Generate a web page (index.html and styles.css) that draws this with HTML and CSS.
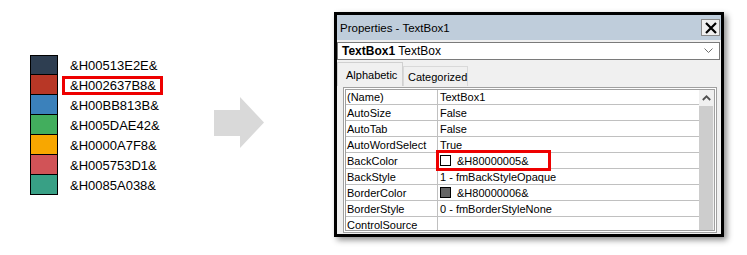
FILE: index.html
```html
<!DOCTYPE html>
<html>
<head>
<meta charset="utf-8">
<link rel="stylesheet" href="styles.css">
</head>
<body>
<div class="page">
  <div class="palette">
    <div class="row"><span class="chip c1"></span><span class="code">&amp;H00513E2E&amp;</span></div>
    <div class="row"><span class="chip c2"></span><span class="code hl">&amp;H002637B8&amp;</span></div>
    <div class="row"><span class="chip c3"></span><span class="code">&amp;H00BB813B&amp;</span></div>
    <div class="row"><span class="chip c4"></span><span class="code">&amp;H005DAE42&amp;</span></div>
    <div class="row"><span class="chip c5"></span><span class="code">&amp;H0000A7F8&amp;</span></div>
    <div class="row"><span class="chip c6"></span><span class="code">&amp;H005753D1&amp;</span></div>
    <div class="row"><span class="chip c7"></span><span class="code">&amp;H0085A038&amp;</span></div>
  </div>
  <svg class="arrow" width="50" height="51" viewBox="0 0 50 51"><polygon points="0,13 26,13 26,0 50,25.5 26,51 26,39 0,39" fill="#d9d9d9"/></svg>
  <div class="window">
    <div class="titlebar">
      <span class="title">Properties - TextBox1</span>
      <span class="close"><svg width="12" height="12" viewBox="0 0 12 12"><path d="M1 1L11 11M11 1L1 11" stroke="#000" stroke-width="2.2"/></svg></span>
    </div>
    <div class="combo">
      <span class="combo-text"><b>TextBox1</b> TextBox</span>
      <svg class="chev" width="9" height="6" viewBox="0 0 9 6"><path d="M0.5 0.5L4.5 4.5L8.5 0.5" stroke="#707070" stroke-width="1" fill="none"/></svg>
    </div>
    <div class="tabs">
      <span class="tab active">Alphabetic</span>
      <span class="tab">Categorized</span>
    </div>
    <div class="grid">
      <div class="rows">
        <div class="prow"><span class="pname">(Name)</span><span class="pval">TextBox1</span></div>
        <div class="prow"><span class="pname">AutoSize</span><span class="pval">False</span></div>
        <div class="prow"><span class="pname">AutoTab</span><span class="pval">False</span></div>
        <div class="prow"><span class="pname">AutoWordSelect</span><span class="pval">True</span></div>
        <div class="prow"><span class="pname">BackColor</span><span class="pval boxed"><span class="sw sw-white"></span>&amp;H80000005&amp;</span></div>
        <div class="prow"><span class="pname">BackStyle</span><span class="pval">1 - fmBackStyleOpaque</span></div>
        <div class="prow"><span class="pname">BorderColor</span><span class="pval"><span class="sw sw-gray"></span>&amp;H80000006&amp;</span></div>
        <div class="prow"><span class="pname">BorderStyle</span><span class="pval">0 - fmBorderStyleNone</span></div>
        <div class="prow last"><span class="pname">ControlSource</span><span class="pval"></span></div>
      </div>
      <div class="scroll">
        <div class="sbtn"><svg width="9" height="6" viewBox="0 0 9 6"><path d="M0.8 5L4.5 1.3L8.2 5" stroke="#505050" stroke-width="1.8" fill="none"/></svg></div>
        <div class="thumb"></div>
      </div>
    </div>
  </div>
</div>
</body>
</html>
```
FILE: styles.css
```css
html, body {
  margin: 0;
  padding: 0;
  background: #fff;
}
.page {
  display: flex;
  align-items: flex-start;
  width: 747px;
  height: 255px;
  overflow: hidden;
}
.palette {
  margin-left: 30px;
  margin-top: 55px;
  width: 150px;
  display: flex;
  flex-direction: column;
}
.row {
  display: flex;
  align-items: center;
  height: 20px;
}
.chip {
  box-sizing: border-box;
  width: 28px;
  height: 21px;
  border: 1px solid #000;
  margin-top: -1px;
}
.row:first-child .chip { margin-top: 0; height: 20px; }
.c1 { background: #2E3E51; }
.c2 { background: #B83726; }
.c3 { background: #3B81BB; }
.c4 { background: #42AE5D; }
.c5 { background: #F8A700; }
.c6 { background: #D15357; }
.c7 { background: #38A085; }
.code {
  position: relative;
  margin-left: 12px;
  font-family: "Liberation Sans", Arial, sans-serif;
  font-size: 13px;
  color: #000;
}
.code.hl::after {
  content: "";
  position: absolute;
  left: -8px;
  top: -2px;
  width: 101px;
  height: 19px;
  box-sizing: border-box;
  border: 3px solid #ee0000;
}
.arrow {
  margin-left: 34px;
  margin-top: 97px;
  flex: none;
}
.window {
  flex: none;
  margin-left: 70px;
  margin-top: 12px;
  width: 390px;
  height: 225px;
  box-sizing: border-box;
  border: 3px solid #000;
  background: #f0f0f0;
  box-shadow: 3px 3px 6px rgba(0,0,0,0.45);
  display: flex;
  flex-direction: column;
  font-family: "Liberation Sans", Arial, sans-serif;
  font-size: 11px;
  color: #000;
  overflow: hidden;
}
.titlebar {
  height: 25px;
  background: #bfcddb;
  display: flex;
  align-items: center;
  justify-content: space-between;
  flex: none;
}
.title {
  margin-left: 3px;
  font-size: 11.5px;
}
.close {
  width: 19px;
  height: 17px;
  margin-right: 1px;
  box-sizing: border-box;
  border: 1px solid #8a8a8a;
  background: #f0f0f0;
  display: flex;
  align-items: center;
  justify-content: center;
}
.combo {
  flex: none;
  margin: 2px 1px 0 0;
  height: 18px;
  box-sizing: border-box;
  border: 1px solid #7a7a7a;
  background: #fff;
  display: flex;
  align-items: center;
  justify-content: space-between;
  padding: 0 6px 0 4px;
  font-size: 12px;
}
.chev { flex: none; }
.tabs {
  flex: none;
  margin-top: 2px;
  height: 24px;
  display: flex;
  align-items: flex-end;
}
.tab {
  box-sizing: border-box;
  height: 20px;
  width: 65px;
  border: 1px solid #d9d9d9;
  border-bottom: none;
  display: flex;
  align-items: center;
  padding-left: 4px;
}
.tab.active {
  height: 24px;
  width: 66px;
  padding-left: 8px;
  border-color: #d0d0d0;
}
.grid {
  flex: none;
  margin: 1px 4px 0 6px;
  height: 146px;
  box-sizing: border-box;
  border: 3px double #a0a0a0;
  background: #fff;
  display: flex;
  overflow: hidden;
}
.rows {
  flex: 1;
  display: flex;
  flex-direction: column;
}
.prow {
  flex: none;
  height: 16px;
  box-sizing: border-box;
  border-bottom: 1px solid #c0c0c0;
  display: flex;
}
.prow:first-child { height: 15px; }
.prow.last { border-bottom: none; }
.pname {
  width: 92px;
  box-sizing: border-box;
  padding-left: 1px;
  border-right: 1px solid #c0c0c0;
  display: flex;
  align-items: center;
}
.pval {
  position: relative;
  flex: 1;
  display: flex;
  align-items: center;
  padding-left: 2px;
}
.sw {
  box-sizing: border-box;
  width: 11px;
  height: 11px;
  border: 1px solid #000;
  margin-right: 6px;
}
.sw-white { background: #fff; }
.sw-gray { background: #646464; }
.boxed::after {
  content: "";
  position: absolute;
  left: -2px;
  top: -3px;
  width: 115px;
  height: 21px;
  box-sizing: border-box;
  border: 3px solid #ee0000;
}
.scroll {
  width: 15px;
  flex: none;
  background: #f0f0f0;
  display: flex;
  flex-direction: column;
}
.sbtn {
  height: 16px;
  display: flex;
  align-items: center;
  justify-content: center;
}
.thumb {
  flex: 1;
  margin-right: 1px;
  background: #cdcdcd;
}
```
